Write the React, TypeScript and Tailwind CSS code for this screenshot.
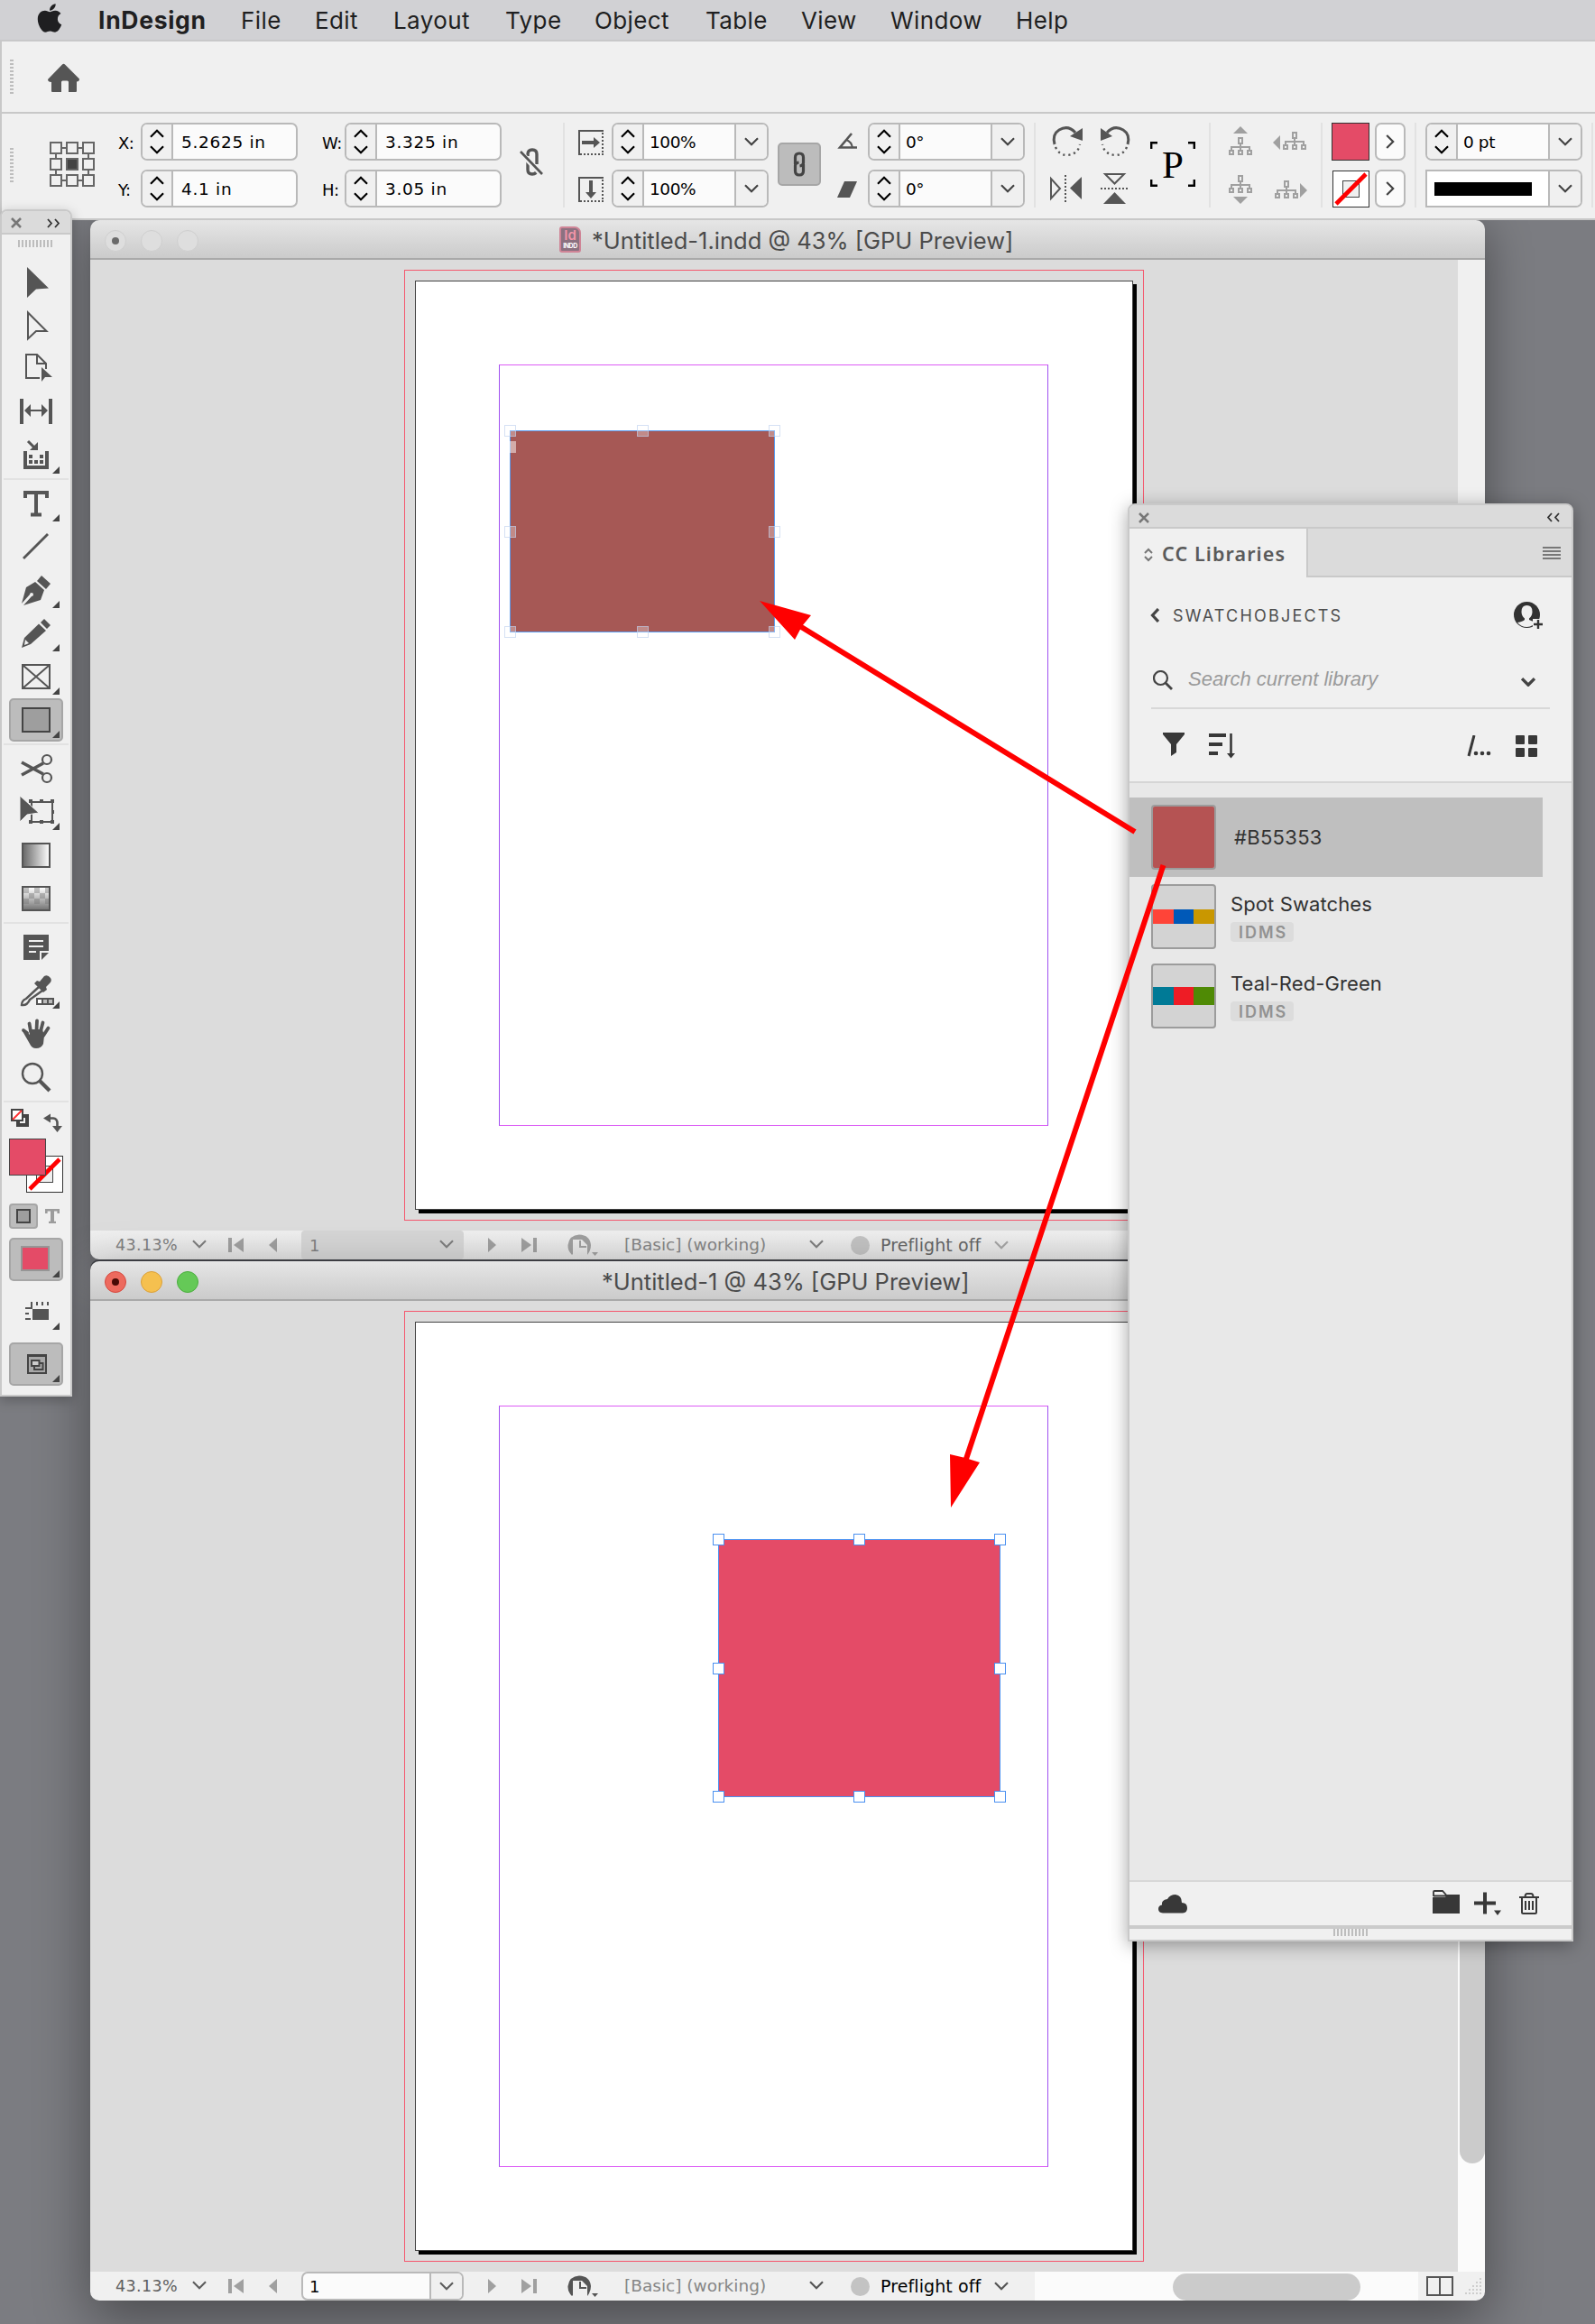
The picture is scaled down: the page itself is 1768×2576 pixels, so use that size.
import type { ReactNode } from 'react';
import { clsx } from 'clsx';
import { FaApple } from 'react-icons/fa';

const UI = "font-['DejaVu_Sans','Noto_Sans',sans-serif]";
const SYS = "font-['Inter',sans-serif]";

const menus = [
    { label: 'File', cls: 'w-[82px]' },
    { label: 'Edit', cls: 'w-[87px]' },
    { label: 'Layout', cls: 'w-[124px]' },
    { label: 'Type', cls: 'w-[99px]' },
    { label: 'Object', cls: 'w-[123px]' },
    { label: 'Table', cls: 'w-[106px]' },
    { label: 'View', cls: 'w-[99px]' },
    { label: 'Window', cls: 'w-[139px]' },
    { label: 'Help', cls: 'w-[70px]' },
];

function MenuBar() {
    return (
        <div className={clsx('flex h-[46px] items-center border-b-2 border-[#c8c8c9] bg-[#d1d1d4] pt-px text-[26px] text-[#1f1f21]', SYS)}>
            <FaApple size={36} className="ml-[37px] mt-[-6px] shrink-0" />
            <span className="ml-[36px] w-[158px] shrink-0 text-[26.5px] font-bold tracking-[0.7px]">InDesign</span>
            {menus.map((m) => (
                <span key={m.label} className={clsx('shrink-0 tracking-[0.4px]', m.cls)}>{m.label}</span>
            ))}
        </div>
    );
}

function DotGrip({ className }: { className?: string }) {
    return (
        <svg className={clsx('h-[38px] w-1 shrink-0', className)} viewBox="0 0 4 38">
            <path d="M2 0V38" stroke="#bdbdbd" strokeWidth="4" strokeDasharray="2 2" />
        </svg>
    );
}

function BarGrip({ className }: { className?: string }) {
    return (
        <svg className={clsx('h-2 w-[38px] shrink-0', className)} viewBox="0 0 38 8">
            <path d="M0 4H38" stroke="#bdbdbd" strokeWidth="8" strokeDasharray="2 2" />
        </svg>
    );
}

function Chevron({ className, w = 2.2 }: { className?: string; w?: number }) {
    return (
        <svg className={clsx('h-[10px] w-4 shrink-0', className)} viewBox="0 0 16 10" fill="none" stroke="currentColor" strokeWidth={w}>
            <path d="M1 1.2L8 8.2L15 1.2" />
        </svg>
    );
}

function Spinner() {
    return (
        <div className="flex h-full w-[34px] shrink-0 flex-col items-center justify-between border-r-2 border-[#b9b9b9] bg-[#f0f0f0] py-[5px] text-black">
            <Chevron className="rotate-180" />
            <Chevron />
        </div>
    );
}

function DropButton() {
    return (
        <div className="flex h-full w-[36px] shrink-0 items-center justify-center border-l-2 border-[#b9b9b9] bg-[#f0f0f0] text-[#444]">
            <Chevron />
        </div>
    );
}

function Field({ value, drop }: { value: string; drop?: boolean }) {
    return (
        <div className="flex h-[42px] w-[174px] items-center overflow-hidden rounded-[7px] border-2 border-[#b9b9b9] bg-[#fbfbfb]">
            <Spinner />
            <span className={clsx('flex-1 whitespace-nowrap pt-px text-[18.5px] leading-[38px] text-black', UI, drop ? 'pl-[6px] tracking-[-0.4px]' : 'pl-[9px] tracking-[0.7px]')}>{value}</span>
            {drop && <DropButton />}
        </div>
    );
}

function Labelled({ label, value }: { label: string; value: string }) {
    return (
        <div className="flex items-center">
            <span className={clsx('w-[25px] pt-[3px] text-[18px] tracking-[-0.5px] text-black', UI)}>{label}</span>
            <Field value={value} />
        </div>
    );
}

function Group({ className, children }: { className?: string; children: ReactNode }) {
    return <div className={clsx('flex shrink-0 flex-col gap-[10px]', className)}>{children}</div>;
}

function Divider({ className }: { className?: string }) {
    return <div className={clsx('h-[94px] w-[2px] shrink-0 bg-[#e2e2e2]', className)} />;
}

/* "distribute to siblings" glyph, 26x20 */
const TREE = 'M11 1h4v6h-4zM13 7v4M3 15v-4h20v4M13 11v4M1 15h4v4h-4zM11 15h4v4h-4zM21 15h4v4h-4z';

function NoneSwatch({ className }: { className?: string }) {
    return (
        <svg className={clsx('h-[41px] w-[41px]', className)} viewBox="0 0 41 41">
            <rect x=".5" y=".5" width="40" height="40" fill="#fff" stroke="#333" />
            <rect x="11.5" y="11.5" width="18" height="18" fill="#f0f0f0" stroke="#444" />
            <path d="M4 37L37 4" stroke="#f00" strokeWidth="4.6" />
        </svg>
    );
}

function ArrowButton() {
    return (
        <div className="flex h-[42px] w-[34px] items-center justify-center rounded-[7px] border-2 border-[#b9b9b9] bg-[#fbfbfb] text-[#444]">
            <Chevron className="-rotate-90" />
        </div>
    );
}

const refPoints = [1, 19, 37];

function ControlBar() {
    return (
        <div className="flex h-[118px] items-start border-b-2 border-l-2 border-[#c8c8c8] bg-[#f0f0f0] pt-[10px]">
            <DotGrip className="ml-[9px] mt-7" />
            <svg className="ml-10 mt-[21px] h-[50px] w-[50px] shrink-0" viewBox="0 0 50 50" fill="none" stroke="#666" strokeWidth="2">
                <path d="M14 7h22M14 43h22M7 14v22M43 14v22" />
                {refPoints.map((y) => refPoints.map((x) => (
                    <rect key={`${x}-${y}`} x={x} y={y} width="12" height="12" fill={x === 19 && y === 19 ? '#444' : '#f0f0f0'} />
                )))}
            </svg>
            <Group className="ml-[26px]">
                <Labelled label="X:" value="5.2625 in" />
                <Labelled label="Y:" value="4.1 in" />
            </Group>
            <Group className="ml-[27px]">
                <Labelled label="W:" value="3.325 in" />
                <Labelled label="H:" value="3.05 in" />
            </Group>
            <svg className="ml-5 mt-[28px] h-[32px] w-[28px] shrink-0" viewBox="0 0 28 32" fill="none" stroke="#555" strokeWidth="3.4">
                <path d="M9 9V7q0-5 5-5t5 5v11M9 12v12q0 5 5 5t5-5" />
                <path d="M0 4L24 29" stroke="#f0f0f0" strokeWidth="6" />
                <path d="M1 4L25 29" strokeWidth="2.6" />
            </svg>
            <Divider className="ml-5" />
            <Group className="ml-[15px]">
                <svg className="my-2 h-[28px] w-[28px]" viewBox="0 0 28 28" fill="none" stroke="#555" strokeWidth="2">
                    <path d="M1 28V1H28" />
                    <path d="M27 3V28M2 27H28" strokeDasharray="2 2" />
                    <path d="M4 14h14" strokeWidth="4" />
                    <path d="M17 8l7 6l-7 6z" fill="#555" stroke="none" />
                </svg>
                <svg className="mt-[6px] h-[28px] w-[28px]" viewBox="0 0 28 28" fill="none" stroke="#555" strokeWidth="2">
                    <path d="M1 28V1H28" />
                    <path d="M27 3V28M2 27H28" strokeDasharray="2 2" />
                    <path d="M14 4v14" strokeWidth="4" />
                    <path d="M8 17l6 7l6-7z" fill="#555" stroke="none" />
                </svg>
            </Group>
            <Group className="ml-[9px]">
                <Field value="100%" drop />
                <Field value="100%" drop />
            </Group>
            <div className="ml-[10px] mt-[22px] flex h-12 w-12 shrink-0 items-center justify-center rounded-[5px] border-2 border-[#a6a6a6] bg-[#bcbcbc]">
                <svg className="h-[28px] w-[16px]" viewBox="0 0 16 28" fill="none" stroke="#444" strokeWidth="3.2">
                    <path d="M3.500 14V6.500q0-4.500 4.500-4.500t4.500 4.500v6q0 3-4 3.500" />
                    <path d="M12.500 14v7.500q0 4.500-4.500 4.500t-4.500-4.500v-6q0-3 4-3.500" />
                </svg>
            </div>
            <Group className="ml-[18px] w-[22px]">
                <svg className="mb-[13px] mt-[11px] h-[18px] w-[22px]" viewBox="0 0 22 18" fill="none" stroke="#555" strokeWidth="2.6">
                    <path d="M16 1L3 16.500H22" />
                    <path d="M10 8q6 2 7 9" strokeWidth="2" />
                </svg>
                <svg className="mt-[13px] h-[18px] w-[22px]" viewBox="0 0 22 18">
                    <path d="M8 0H22L14 18H0z" fill="#555" />
                </svg>
            </Group>
            <Group className="ml-3">
                <Field value="0°" drop />
                <Field value="0°" drop />
            </Group>
            <Divider className="ml-[10px]" />
            <Group className="ml-[15px] w-[38px]">
                <svg className="h-[42px] w-[38px]" viewBox="0 0 38 42" fill="none" stroke="#555" strokeWidth="3">
                    <path d="M6 24Q3 13 11 8Q21 2 29 11" />
                    <path d="M37 6V20L23 15z" fill="#555" stroke="none" />
                    <path d="M7 27Q11 36 20 36Q32 35 34 24" strokeWidth="2.400" strokeDasharray="2.200 3.800" />
                </svg>
                <svg className="h-[42px] w-[38px]" viewBox="0 0 38 42">
                    <path d="M2 10V32L12 21z" fill="none" stroke="#555" strokeWidth="2" />
                    <path d="M18 6V38" stroke="#555" strokeWidth="2" strokeDasharray="2 2" />
                    <path d="M36 8V33L23 20.500z" fill="#555" />
                </svg>
            </Group>
            <Group className="ml-4 w-[38px]">
                <svg className="h-[42px] w-[38px]" viewBox="0 0 38 42" fill="none" stroke="#555" strokeWidth="3">
                    <path d="M33 24Q36 13 28 8Q18 2 10 11" />
                    <path d="M3 6V20L16 15z" fill="#555" stroke="none" />
                    <path d="M32 27Q28 36 19 36Q7 35 5 24" strokeWidth="2.400" strokeDasharray="2.200 3.800" />
                </svg>
                <svg className="h-[42px] w-[38px]" viewBox="0 0 38 42">
                    <path d="M8 5H29L18.500 15.500z" fill="none" stroke="#555" strokeWidth="2" />
                    <path d="M3 21H34" stroke="#555" strokeWidth="2" strokeDasharray="2 2" />
                    <path d="M6 38H31L18.500 25z" fill="#555" />
                </svg>
            </Group>
            <div className="relative ml-[20px] mt-[21px] flex h-[50px] w-[50px] shrink-0 items-center justify-center">
                <svg className="absolute inset-0" viewBox="0 0 50 50" fill="none" stroke="#000" strokeWidth="2.400">
                    <path d="M1.200 8V1.200H8M42 1.200H48.800V8M48.800 42V48.800H42M8 48.800H1.200V42" />
                </svg>
                <span className="font-['Liberation_Serif',serif] text-[43px] leading-none text-black">P</span>
            </div>
            <Divider className="ml-[15px]" />
            <svg className="ml-[19px] h-[94px] w-[90px] shrink-0" viewBox="0 0 90 94" fill="none" stroke="#a0a0a0" strokeWidth="2">
                <path d={TREE} transform="translate(1 16)" />
                <path d={TREE} transform="translate(61 10)" />
                <path d={TREE} transform="translate(1 58)" />
                <path d={TREE} transform="translate(52 64)" />
                <path d="M14 4L22 12H6zM58 14V30L50 22zM14 90L22 82H6zM80 67V83L88 75z" fill="#a0a0a0" stroke="none" />
            </svg>
            <Divider className="ml-[13px]" />
            <Group className="ml-[10px]">
                <div className="flex gap-[6px]">
                    <div className="h-[42px] w-[42px] border border-[#333] bg-[#e44b67]" />
                    <ArrowButton />
                </div>
                <div className="flex items-end gap-[6px]">
                    <NoneSwatch className="ml-px" />
                    <ArrowButton />
                </div>
            </Group>
            <Divider className="ml-[10px]" />
            <Group className="ml-[10px]">
                <Field value="0 pt" drop />
                <div className="flex h-[42px] w-[174px] items-center overflow-hidden rounded-r-[7px] border-2 border-[#b9b9b9] bg-white">
                    <div className="ml-2 mr-auto h-[15px] w-[108px] bg-black" />
                    <DropButton />
                </div>
            </Group>
            <Divider className="ml-[10px]" />
        </div>
    );
}

function TopBars() {
    return (
        <div className="relative z-10">
            <MenuBar />
            <div className="flex h-20 items-center border-b-2 border-l-2 border-[#c8c8c8] bg-[#f0f0f0]">
                <DotGrip className="ml-[9px]" />
                <svg className="ml-[37px] mt-[2px] h-[32px] w-[37px]" viewBox="0 0 37 32">
                    <path d="M17 1.500q1.500-1.500 3 0L36 17.500q0 3-3 3V31q0 1-1 1h-8V21q0-1.500-1.500-1.500h-5q-1.500 0-1.500 1.500v11H6q-1 0-1-1V21Q1 21 1 18z" fill="#555" />
                </svg>
            </div>
            <ControlBar />
        </div>
    );
}

/* ---- tools panel: each glyph is drawn in panel coordinates, y is the top of its row ---- */

function Tool({ y, flyout, active, children }: { y: number; flyout?: boolean; active?: boolean; children: ReactNode }) {
    return (
        <svg className="h-12 w-[76px] shrink-0" viewBox={`2 ${y} 76 48`} fill="none" stroke="#555" strokeWidth="2">
            {active && <rect x="11" y={y + 1} width="58" height="46" rx="4" fill="#bcbcbc" stroke="#a6a6a6" />}
            {children}
            {flyout && <path d={`M66 ${y + 36}V${y + 44}H58z`} fill="#444" stroke="none" />}
        </svg>
    );
}

function ToolRule({ className = 'my-[2px]' }: { className?: string }) {
    return <div className={clsx('mx-[2px] h-[2px] shrink-0 bg-[#e2e2e2]', className)} />;
}

function ToolsPanel() {
    return (
        <div className="absolute left-0 top-[232px] z-20 flex h-[1316px] w-20 flex-col rounded-t-[8px] border-2 border-[#c9c9c9] bg-[#f0f0f0] shadow-[0_4px_14px_rgba(0,0,0,0.25)]">
            <div className="flex h-[26px] shrink-0 items-center justify-between rounded-t-[6px] border-b-2 border-[#c9c9c9] bg-[#dbdbdb] pl-[10px] pr-[12px] pt-[2px]">
                <svg className="h-3 w-3" viewBox="0 0 12 12" stroke="#777" strokeWidth="2.600"><path d="M1 1L11 11M11 1L1 11" /></svg>
                <svg className="h-[11px] w-[14px]" viewBox="0 0 14 11" fill="none" stroke="#333" strokeWidth="1.800"><path d="M1 1L5 5.500L1 10M9 1L13 5.500L9 10" /></svg>
            </div>
            <BarGrip className="mb-[15px] ml-[18px] mt-[6px]" />
            <Tool y={289}><path d="M30 296V330L40 320.500L54 319.500z" fill="#555" stroke="none" /></Tool>
            <Tool y={337}><path d="M31 346.500V375.500L40 367H51.500z" /></Tool>
            <Tool y={385}>
                <path d="M44 419H29V393H41L51 403V409M41 393V403H51" />
                <path d="M46 407V423L50 418H58z" fill="#555" stroke="none" />
            </Tool>
            <Tool y={433}>
                <path d="M24 442V470M56 442V470" strokeWidth="4" />
                <path d="M31 455H49" />
                <path d="M27 455L34 448V462zM53 455L46 448V462z" fill="#555" stroke="none" />
            </Tool>
            <Tool y={481} flyout>
                <path d="M28 500V518H52V500" strokeWidth="4" />
                <path d="M32 506H36M44 506H48M32 512H36M38 512H42M44 512H48" strokeWidth="4" />
                <path d="M31 489L38 496" strokeWidth="3" />
                <path d="M42 490V499H33z" fill="#555" stroke="none" />
            </Tool>
            <ToolRule className="mb-[2px] mt-px" />
            <Tool y={534} flyout>
                <path d="M28 552V546H52V552M40 546V570M34 570.500H46" strokeWidth="4" />
            </Tool>
            <Tool y={582}><path d="M26 619L53 592" strokeWidth="2.800" /></Tool>
            <Tool y={630} flyout>
                <path d="M46 638L56 647L51 653L41 644z" fill="#555" stroke="none" />
                <path d="M39 645L49 654L45 665L26 671L35 661A2 2 0 1 0 33 659L24 669L29 651z" fill="#555" stroke="none" />
            </Tool>
            <Tool y={678} flyout>
                <path d="M49 686L56 693L52 697L45 690zM43 691.500L51 699L34 714L24 718L27 707z" fill="#555" stroke="none" />
                <path d="M28 709L32 713L27 715z" fill="#f0f0f0" stroke="none" />
            </Tool>
            <Tool y={726} flyout><path d="M25 737H55V763H25zL55 763M55 737L25 763" /></Tool>
            <Tool y={774} flyout active><path d="M25 785H55V811H25z" fill="#9e9e9e" stroke="#444" /></Tool>
            <ToolRule />
            <Tool y={828}>
                <circle cx="52" cy="842" r="5" strokeWidth="2.200" />
                <circle cx="52" cy="862" r="5" strokeWidth="2.200" />
                <path d="M24 845L48 858M24 859L48 846" strokeWidth="3.600" />
            </Tool>
            <Tool y={876} flyout>
                <path d="M35 889H58V911H35z" />
                <path d="M32 888H36M44 888H48M56 888H60M32 911H36M44 911H48M56 911H60M57 900H60" strokeWidth="4" />
                <path d="M22 882V911L30 903L43 901z" fill="#555" stroke="#f0f0f0" strokeWidth="1" />
            </Tool>
            <Tool y={924}>
                <defs>
                    <linearGradient id="ramp" x1="0" x2="1"><stop stopColor="#666" /><stop offset="1" stopColor="#fff" /></linearGradient>
                    <linearGradient id="fade" x1="0" x2="0" y1="0" y2="1"><stop stopColor="#777" stopOpacity="0" /><stop offset="1" stopColor="#777" /></linearGradient>
                </defs>
                <path d="M25 935H55V961H25z" fill="url(#ramp)" />
            </Tool>
            <Tool y={972}>
                <path d="M25 983H55V1009H25z" fill="#fff" />
                <path d="M26 984h6v6h-6zM38 984h6v6h-6zM50 984h4v6h-4zM32 990h6v6h-6zM44 990h6v6h-6zM26 996h6v6h-6zM38 996h6v6h-6zM50 996h4v6h-4z" fill="#c4c4c4" stroke="none" />
                <path d="M26 984H54V1008H26z" fill="url(#fade)" stroke="none" />
            </Tool>
            <ToolRule />
            <Tool y={1026}>
                <path d="M26 1036H54V1054H44V1064H26zM46 1056H54L46 1064z" fill="#555" stroke="none" />
                <path d="M32 1043H48M32 1049H48M32 1055H40" stroke="#f0f0f0" />
            </Tool>
            <Tool y={1074} flyout>
                <path d="M43 1094L29 1107Q24 1109 24 1114Q30 1115 33 1108L47 1098" strokeWidth="2.400" />
                <path d="M38 1090L41 1087L44 1088L49 1082Q53 1080 56 1084Q58 1087 55 1090L51 1094L52 1097L48 1100z" fill="#555" stroke="none" />
                <path d="M41 1107H59V1113H41z" fill="#bbb" />
                <path d="M42 1108H47V1112H42z" fill="#fff" stroke="none" />
                <path d="M47 1107V1113M53 1107V1113" />
            </Tool>
            <Tool y={1122}>
                <path d="M30 1145L26 1142M34 1143L32.500 1134.500M40.500 1142L41 1131.500M45 1143L47.500 1133.500M48 1148L53.500 1139.500" strokeWidth="3.800" strokeLinecap="round" />
                <path d="M32 1141H47L49 1148L48 1157Q46 1162 40 1162Q35 1162 33 1157L25 1143L28 1142L33 1147z" fill="#555" stroke="none" />
            </Tool>
            <Tool y={1170}>
                <circle cx="36" cy="1190" r="11" strokeWidth="2.400" />
                <path d="M44 1198L55 1209" strokeWidth="4.200" />
            </Tool>
            <ToolRule />

            <svg className="h-[36px] w-[76px] shrink-0" viewBox="2 1224 76 36" fill="none" stroke="#555" strokeWidth="2">
                <path d="M20 1237H30V1247H20z" strokeWidth="4" stroke="#444" />
                <path d="M13 1230H25V1242H13z" fill="#fff" stroke="#444" />
                <path d="M14 1241L24 1231" stroke="#f33" />
                <path d="M54 1239.500H59Q63 1240 63.500 1244V1249" strokeWidth="2.600" />
                <path d="M48 1239.500L56 1234.500V1244.500zM58 1248H69L63.500 1255z" fill="#555" stroke="none" />
            </svg>
            <div className="relative mt-[2px] h-[60px] shrink-0">
                <NoneSwatch className="absolute left-[27px] top-[19px]" />
                <div className="absolute left-2 top-0 h-[41px] w-[41px] border border-[#444] bg-[#e44b67]" />
            </div>
            <div className="ml-2 mt-3 flex h-7 shrink-0 items-center">
                <div className="flex h-7 w-8 items-center justify-center rounded-[4px] border-2 border-[#a6a6a6] bg-[#bcbcbc]">
                    <div className="h-4 w-4 border-2 border-[#444] bg-[#9e9e9e]" />
                </div>
                <svg className="ml-2 h-4 w-4" viewBox="0 0 16 16" fill="none" stroke="#9c9c9c" strokeWidth="2.600"><path d="M1.300 5V1.300H14.700V5M4 15H12" /><path d="M8 1V15" strokeWidth="4" /></svg>
            </div>
            <div className="h-[10px] shrink-0" />
            <Tool y={1372} flyout active><path d="M24 1382H54V1408H24z" fill="#e44b67" stroke="#969696" /></Tool>
            <div className="h-[10px] shrink-0" />
            <Tool y={1430} flyout>
                <path d="M36 1451H54V1463H36z" fill="#555" stroke="none" />
                <path d="M28 1450H35M35 1443V1451M41 1443V1447M47 1443V1447M53 1443V1447M28 1456H32M28 1462H34" />
            </Tool>
            <div className="h-[10px] shrink-0" />
            <Tool y={1488} flyout active>
                <path d="M31 1503H51V1522H31z" fill="#a8a8a8" stroke="#444" />
                <path d="M30 1502.500H52" stroke="#444" strokeWidth="3" />
                <path d="M38 1511H47.500V1518H38z" stroke="#444" />
                <path d="M35 1508H43.500V1514H35z" fill="#ccc" stroke="#444" />
            </Tool>
        </div>
    );
}

/* ---- document windows ---- */

function StatusBar({ inactive }: { inactive?: boolean }) {
    return (
        <div className={clsx('flex h-8 shrink-0 items-center text-[18px]', UI, inactive ? 'bg-gradient-to-b from-[#f0f0f0] to-[#e2e2e2] text-[#808080]' : 'bg-[#f0f0f0] text-[#5f5f5f]')}>
            <span className="ml-[28px] w-[85px] text-[17.5px] tracking-[0.4px]">43.13%</span>
            <Chevron className="mt-[-3px]" />
            <svg className="ml-6 h-4 w-[54px] shrink-0" viewBox="0 0 54 16" fill="#a0a0a0"><path d="M0 0H4V16H0zM17 0V16L6 8zM54 0V16L45 8z" /></svg>
            <div className={clsx('ml-[27px] flex h-8 w-[180px] shrink-0 items-center overflow-hidden', inactive ? 'rounded bg-[#d6d6d6]' : 'rounded-[7px] border-2 border-[#b9b9b9] bg-[#fbfbfb]')}>
                <span className={clsx('flex-1', inactive ? 'pl-[9px]' : 'pl-[7px] text-black')}>1</span>
                <div className={clsx('flex h-full w-[36px] items-center justify-center', inactive ? 'pb-[3px] pr-[2px]' : 'border-l-2 border-[#b9b9b9] bg-[#f0f0f0]')}>
                    <Chevron />
                </div>
            </div>
            <svg className="ml-[27px] h-4 w-[54px] shrink-0" viewBox="0 0 54 16" fill="#a0a0a0"><path d="M0 0V16L9 8zM37 0V16L48 8zM50 0H54V16H50z" /></svg>
            <svg className={clsx('ml-[34px] h-6 w-[34px] shrink-0', inactive ? 'text-[#a0a0a0]' : 'text-[#555]')} viewBox="0 0 34 24">
                <path d="M5 23Q0 18 .5 12Q2 1 13 .5Q25 1 26 12Q26 18 22 23V12L16 6H6V22z" fill="currentColor" />
                <path d="M14 7V14H21" fill="none" stroke="currentColor" strokeWidth="2" />
                <path d="M27 20H34L30.500 24z" fill="currentColor" />
            </svg>
            <span className="ml-[29px] w-[205px] shrink-0 whitespace-nowrap text-[18.5px] text-[#868686]">[Basic] (working)</span>
            <Chevron className={inactive ? 'mt-[-3px]' : 'mt-[-3px] text-[#555]'} />
            <div className="ml-[30px] h-[21px] w-[21px] shrink-0 rounded-full bg-[#c3c3c3]" />
            <span className={clsx('ml-3 w-[126px] shrink-0 whitespace-nowrap text-[19px] tracking-[0.1px]', inactive ? 'text-[#666]' : 'text-black')}>Preflight off</span>
            <Chevron className={inactive ? 'text-[#a5a5a5]' : 'text-[#555]'} />
            {!inactive && (
                <>
                    <div className="ml-[29px] flex h-8 flex-1 bg-[#fbfbfb]">
                        <div className="ml-[153px] mt-[2px] h-[30px] w-[208px] rounded-full bg-[#cbcbcb]" />
                    </div>
                    <svg className="ml-[9px] h-[22px] w-[30px]" viewBox="0 0 30 22" fill="none" stroke="#555" strokeWidth="2"><path d="M1 1H29V21H1zM15 1V21" /></svg>
                    <svg className="ml-[13px] mr-1 h-[18px] w-[18px]" viewBox="0 0 18 18" fill="none" stroke="#cdcdcd" strokeWidth="2" strokeDasharray="2 2">
                        <path d="M16 1H18M12 5H18M8 9H18M4 13H18M0 17H18" />
                    </svg>
                </>
            )}
        </div>
    );
}

interface DocProps {
    title: string;
    inactive?: boolean;
    className: string;
    children: ReactNode;
}

function DocWindow({ title, inactive, className, children }: DocProps) {
    const lights = inactive
        ? ['border-[#cfcfcf] bg-[#dedede]', 'border-[#cfcfcf] bg-[#dedede]', 'border-[#cfcfcf] bg-[#dedede]']
        : ['border-[#d6493f] bg-[#ed6a5e]', 'border-[#dba03a] bg-[#f5c04f]', 'border-[#4cae40] bg-[#65c957]'];
    return (
        <div className={clsx('absolute left-[100px] flex h-[1152px] w-[1546px] flex-col overflow-hidden rounded-[10px]', className)}>
            <div className={clsx('relative flex h-11 shrink-0 items-center border-b-2 border-[#a9a9a9] bg-gradient-to-b from-[#e6e6e6] to-[#cbcbcb] pl-4', SYS)}>
                <div className="flex gap-4 pt-1">
                    {lights.map((c, i) => (
                        <span key={i} className={clsx('flex h-6 w-6 items-center justify-center rounded-full border', c)}>
                            {i === 0 && <span className={clsx('h-2 w-2 rounded-full', inactive ? 'bg-[#6b6b6b]' : 'bg-[#480a05]')} />}
                        </span>
                    ))}
                </div>
                {inactive && (
                    <div className="ml-[400px] flex h-[29px] w-6 flex-col items-center rounded-[3px] rounded-tr-[7px] border-2 border-[#cf8496] bg-[#8c7180]">
                        <span className="text-[15px] font-semibold leading-[16px] text-[#f295a8]">Id</span>
                        <span className="text-[7px] font-bold leading-[7px] tracking-[-0.5px] text-white">INDD</span>
                    </div>
                )}
                <span className={clsx('whitespace-nowrap pt-1 text-[25.5px] text-[#4b4b4b]', inactive ? 'ml-[12px]' : 'ml-[447px]')}>{title}</span>
            </div>
            <div className="flex h-[1076px] shrink-0 bg-[#dcdcdc]">
                <div className="relative h-full w-[1516px]">
                    {/* bleed, page, margins */}
                    <div className="absolute left-[348px] top-[11px] h-[1054px] w-[820px] border border-[#f4586e]" />
                    <div className="absolute left-[360px] top-[23px] h-[1030px] w-[796px] border border-[#444] bg-white shadow-[4px_4px_0_#000]" />
                    <div className="absolute left-[453px] top-[116px] h-[844px] w-[609px] border border-x-[#a050f0] border-y-[#dc5cf5]" />
                    {children}
                </div>
                <div className={clsx('flex-1', inactive ? 'bg-[#f0f0f0]' : 'bg-[#fbfbfb] pl-[2px]')}>
                    {!inactive && <div className="h-[956px] w-7 rounded-b-full bg-[#cbcbcb]" />}
                </div>
            </div>
            <StatusBar inactive={inactive} />
        </div>
    );
}

const handleSpots = [[0, 0], [0.5, 0], [1, 0], [0, 0.5], [1, 0.5], [0, 1], [0.5, 1], [1, 1]];

function Handles({ w, h, className }: { w: number; h: number; className: string }) {
    return (
        <>
            {handleSpots.map(([x, y]) => (
                <span
                    key={`${x}${y}`}
                    className={clsx('absolute h-[13px] w-[13px] border', className)}
                    style={{ left: Math.round(x * (w - 1)) - 7, top: Math.round(y * (h - 1)) - 7 }}
                />
            ))}
        </>
    );
}

/* ---- CC Libraries ---- */

function LibraryItem({ name, tag, colors, band }: { name: string; tag?: string; colors: string[]; band: string }) {
    return (
        <div className={clsx('flex h-[88px] w-[458px] items-center pl-6', !tag && 'bg-[#bfbfbf]')}>
            <div className="flex h-[72px] w-[72px] items-center overflow-hidden rounded-[4px] border-2 border-[#9c9c9c] bg-[#d3d3d3]">
                <div className={clsx('flex w-full', band)}>
                    {colors.map((c) => <div key={c} className={clsx('h-full flex-1', c)} />)}
                </div>
            </div>
            <div className={clsx('flex flex-col items-start', tag ? 'ml-4' : 'ml-5')}>
                <span className={clsx('text-[22px] leading-[26px] text-[#323232]', SYS, tag ? 'tracking-[0.1px]' : 'tracking-[0.3px]')}>{name}</span>
                {tag && <span className={clsx('mt-[7px] h-[22px] w-[70px] rounded-[4px] bg-[#dcdcdc] pl-[9px] text-[18px] font-semibold leading-[23px] tracking-[2px] text-[#929292]', SYS)}>{tag}</span>}
            </div>
        </div>
    );
}

function LibrariesPanel() {
    return (
        <div className="absolute left-[1250px] top-[558px] z-20 flex h-[1594px] w-[494px] flex-col rounded-t-[8px] border-2 border-[#c9c9c9] bg-[#f0f0f0] shadow-[0_4px_20px_rgba(0,0,0,0.35)]">
            <div className="flex h-[26px] shrink-0 items-center justify-between rounded-t-[6px] border-b-2 border-[#c9c9c9] bg-[#dbdbdb] pl-[10px] pr-[13px] pt-1">
                <svg className="h-3 w-3" viewBox="0 0 12 12" stroke="#777" strokeWidth="2.600"><path d="M1 1L11 11M11 1L1 11" /></svg>
                <svg className="mb-[2px] h-[11px] w-[14px]" viewBox="0 0 14 11" fill="none" stroke="#333" strokeWidth="1.800"><path d="M5 1L1 5.500L5 10M13 1L9 5.500L13 10" /></svg>
            </div>
            <div className="flex h-[54px] shrink-0">
                <div className="flex w-[196px] items-center pl-4 text-[#5a5a5a]">
                    <svg className="mr-[10px] mt-[3px] h-4 w-[10px] shrink-0" viewBox="0 0 10 16" fill="none" stroke="#777" strokeWidth="2"><path d="M1 6L5 2L9 6M1 10L5 14L9 10" /></svg>
                    <span className="whitespace-nowrap pt-[2px] font-['Noto_Sans',sans-serif] text-[21.5px] font-semibold tracking-[1.100px]">CC Libraries</span>
                </div>
                <div className="flex flex-1 items-center justify-end border-b-2 border-l-2 border-[#c9c9c9] bg-[#dbdbdb] pr-3 pt-px">
                    <svg className="h-[14px] w-5" viewBox="0 0 20 14" stroke="#777" strokeWidth="2"><path d="M0 1H20M0 5H20M0 9H20M0 13H20" /></svg>
                </div>
            </div>

            <div className="flex h-[82px] shrink-0 items-center pl-[23px] pr-[32px] pt-[2px]">
                <svg className="h-4 w-[10px]" viewBox="0 0 10 16" fill="none" stroke="#444" strokeWidth="3.200"><path d="M9 1L2.500 8L9 15" /></svg>
                <span className={clsx('ml-[15px] flex-1 text-[18px] tracking-[2.2px] text-[#4d4d4d]', SYS)}>SWATCHOBJECTS</span>
                <svg className="h-[31px] w-[32px]" viewBox="0 0 32 31">
                    <circle cx="14.500" cy="14.500" r="14.500" fill="#323232" />
                    <path d="M14.500 4Q20.500 4 20.500 11Q20.500 16 17 18.500V20Q20 22 24 22L21 26Q18 28 14.500 28Q8 28 4 23Q10 22 12 20V18.500Q8.500 16 8.500 11Q8.500 4 14.500 4z" fill="#f0f0f0" />
                    <path d="M21 19H32V31H21z" fill="#f0f0f0" />
                    <path d="M27 20V30M22 25H32" stroke="#323232" strokeWidth="2.400" />
                </svg>
            </div>
            <div className="mx-6 flex h-[64px] shrink-0 items-center border-b-2 border-[#d8d8d8] pl-[2px] pr-4">
                <svg className="mt-[2px] h-[22px] w-[22px]" viewBox="0 0 22 22" fill="none" stroke="#444" strokeWidth="2.200"><circle cx="8.500" cy="8.500" r="7.500" /><path d="M14 14L21 21" strokeWidth="2.800" /></svg>
                <span className="ml-[17px] flex-1 pb-[2px] font-['Liberation_Sans',sans-serif] text-[22px] italic text-[#9a9a9a]">Search current library</span>
                <Chevron className="mt-[6px] text-[#444]" w={3.4} />
            </div>
            <div className="flex h-[82px] shrink-0 items-center border-b-2 border-[#d5d5d5] pl-[37px] pr-[38px] pt-[2px]">
                <svg className="mb-1 h-[26px] w-6" viewBox="0 0 24 26"><path d="M0 0H24V2L15 13V22L9 26V13L0 2z" fill="#383838" /></svg>
                <svg className="ml-[27px] h-7 w-[29px]" viewBox="0 0 29 28" fill="none" stroke="#383838" strokeWidth="4">
                    <path d="M0 2H19M0 12H15M0 22H10" />
                    <path d="M24.500 0V23" strokeWidth="2.600" />
                    <path d="M20 22H29L24.500 27.500z" fill="#383838" stroke="none" />
                </svg>
                <svg className="ml-auto h-6 w-[27px]" viewBox="0 0 27 24" fill="#383838">
                    <path d="M2 23L8 0" stroke="#383838" strokeWidth="3" />
                    <circle cx="10" cy="20" r="2.300" /><circle cx="17" cy="20" r="2.300" /><circle cx="24" cy="20" r="2.300" />
                </svg>
                <svg className="ml-[27px] h-6 w-6" viewBox="0 0 24 24" fill="#383838"><rect width="10" height="10" rx="1" /><rect x="14" width="10" height="10" rx="1" /><rect y="14" width="10" height="10" rx="1" /><rect x="14" y="14" width="10" height="10" rx="1" /></svg>
            </div>

            <div className="min-h-0 flex-1 bg-[#e8e8e8] pt-4">
                <LibraryItem name="#B55353" colors={['bg-[#b55353]']} band="h-full" />
                <LibraryItem name="Spot Swatches" tag="IDMS" colors={['bg-[#ff4438]', 'bg-[#0059b8]', 'bg-[#c99700]']} band="h-4" />
                <LibraryItem name="Teal-Red-Green" tag="IDMS" colors={['bg-[#007a96]', 'bg-[#ee1c25]', 'bg-[#4f8a05]']} band="h-5" />
            </div>

            <div className="flex h-[50px] shrink-0 items-center border-t-2 border-[#d8d8d8] pl-8 pr-[36px]">
                <svg className="h-[21px] w-[33px]" viewBox="0 0 33 21"><path d="M5 20.500Q0 20 0 16Q0 12 4 11.500Q3 6 10 5Q13 0 19 0Q26 1 26 9Q32 9 32 15Q32 20 27 20.500z" fill="#383838" /></svg>
                <svg className="ml-auto mb-1 h-[27px] w-[31px]" viewBox="0 0 31 27"><path d="M1 7V2Q1 1 2 1H11L16 6.500H1" fill="#f0f0f0" stroke="#383838" strokeWidth="1.800" /><path d="M0 8H14L16 5H30V26H0z" fill="#383838" /></svg>
                <svg className="ml-[15px] h-[26px] w-[31px]" viewBox="0 0 31 26"><path d="M0 12.500H24M12 .5V24.500" stroke="#383838" strokeWidth="4" /><path d="M22 20.500H30L26 26z" fill="#383838" /></svg>
                <svg className="ml-[19px] h-6 w-[22px]" viewBox="0 0 22 24" fill="none" stroke="#383838" strokeWidth="2"><path d="M0 5H22M6.500 5Q6.500 1 9 1H13Q15.500 1 15.500 5M3 6V21.500Q3 23 4.500 23H17.500Q19 23 19 21.500V6M7 9V19M11 9V19M15 9V19" /></svg>
            </div>
            <div className="flex h-4 shrink-0 justify-center border-t-4 border-[#cbcbcb]">
                <BarGrip />
            </div>
        </div>
    );
}

export default function App() {
    return (
        <div className="relative h-[2576px] w-[1768px] overflow-hidden bg-[#7b7c81]">
            <TopBars />

            <DocWindow title="*Untitled-1.indd @ 43% [GPU Preview]" inactive className="top-[244px] shadow-[0_10px_50px_rgba(0,0,0,0.4)]">
                <div className="absolute left-[465px] top-[189px] h-[224px] w-[294px] border border-[#5a9bef] bg-[#a65855]">
                    <Handles w={294} h={224} className="border-[#b9cdec]/60 bg-white/30" />
                    <span className="absolute left-[-2px] top-[11px] h-[13px] w-[8px] bg-white/50" />
                </div>
            </DocWindow>

            <DocWindow title="*Untitled-1 @ 43% [GPU Preview]" className="top-[1398px] shadow-[0_-2px_0_#3c3d42,0_20px_60px_rgba(0,0,0,0.4)]">
                <div className="absolute left-[696px] top-[264px] h-[286px] w-[313px] border border-[#4a90f0] bg-[#e44b67]">
                    <Handles w={313} h={286} className="border-[#4a90f0] bg-white" />
                </div>
            </DocWindow>

            <LibrariesPanel />
            <ToolsPanel />

            {/* callout arrows */}
            <svg className="absolute inset-0 z-30" width="1768" height="2576" viewBox="0 0 1768 2576" fill="#f00" stroke="#f00" strokeWidth="6">
                <path d="M1258 922L885 693M1289.500 959L1070 1620" />
                <path d="M842 666L899 682L889 694L881 709zM1054 1671L1053 1612L1070 1616L1086 1621z" stroke="none" />
            </svg>
        </div>
    );
}
